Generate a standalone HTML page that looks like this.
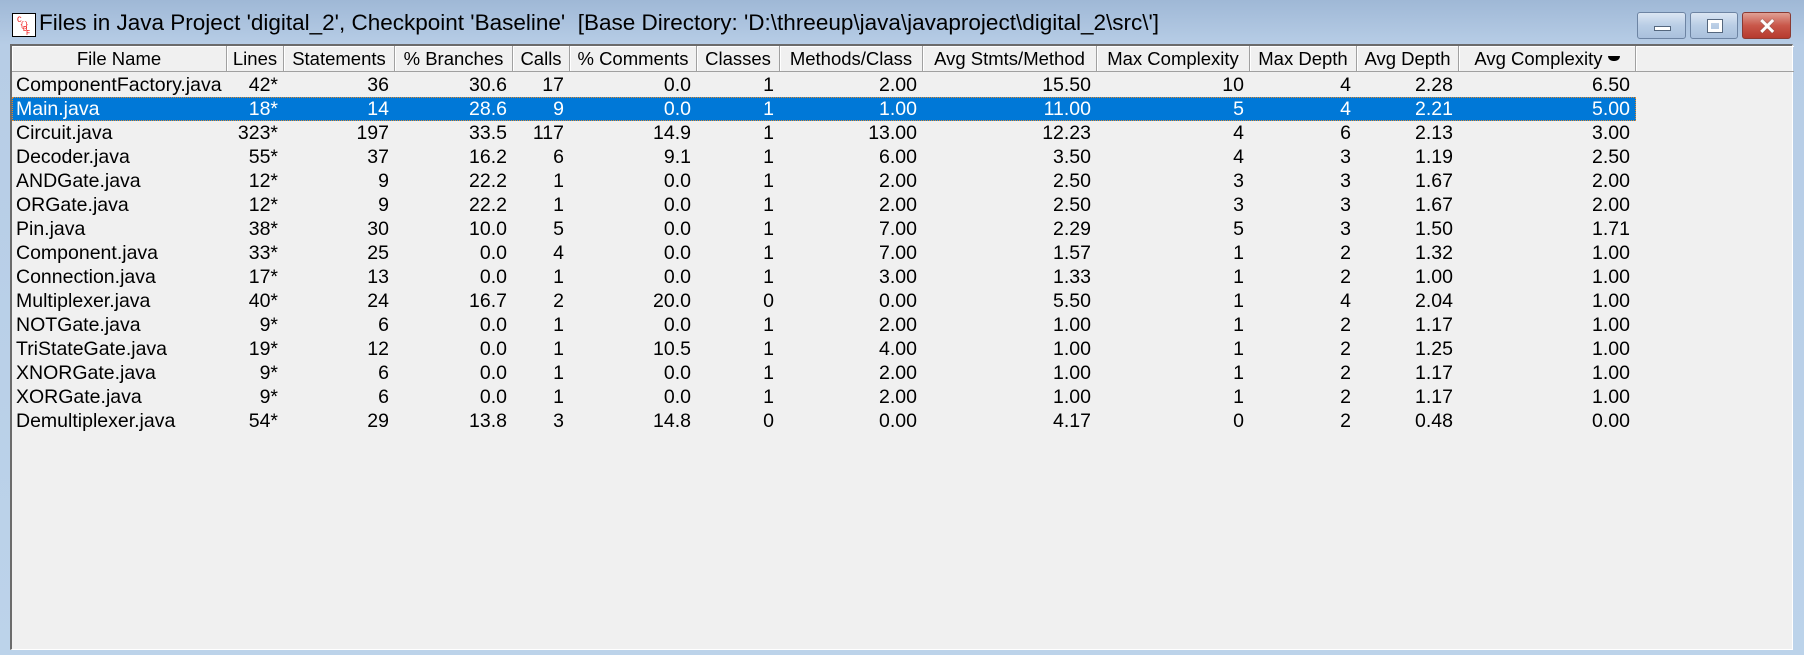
<!DOCTYPE html>
<html><head><meta charset="utf-8"><style>
*{margin:0;padding:0;box-sizing:border-box}
body{width:1804px;height:655px;overflow:hidden;background:linear-gradient(#9fb8d6,#b7cde6 45px,#bcd3ea);font-family:"Liberation Sans",Arial,sans-serif;position:relative}
.title{position:absolute;left:39px;top:10px;font-size:22.5px;color:#000;white-space:pre}
.icon{position:absolute;left:12px;top:13px;width:24px;height:24px;background:#fff;border:1px solid #000}
.btn{position:absolute;top:12px;height:27px;border:1px solid #6d84a3;border-radius:3px;background:linear-gradient(#dbe6f3,#b9cde5 50%,#a9c0dc)}
.close{background:linear-gradient(#e0a195,#c9574a 50%,#b63a2e);border-color:#8a3a33}
.panel{position:absolute;left:10px;top:44px;width:1783px;height:606px;background:#f0f0f0;border-left:2px solid #6b6b6b;border-top:2px solid #6b6b6b;border-right:1px solid #fff;border-bottom:1px solid #fff}
.hdr{position:absolute;top:0;height:26px;border-right:1px solid #a0a0a0;border-bottom:1px solid #a0a0a0;box-shadow:inset 1px 1px 0 #fff;font-size:18.5px;text-align:center;line-height:25px;white-space:nowrap;overflow:hidden}
.row{position:absolute;left:0;width:1624px;height:24px;font-size:19.5px;line-height:24px;white-space:nowrap}
.row span{position:absolute;top:0;text-align:right;padding-right:6px}
.row span:first-child{text-align:left;padding-left:4px}
.sel{background:#0078d7;color:#fff;outline:1px dotted #e08a30;outline-offset:-1px}
</style></head><body>
<div class="icon"><svg width="22" height="22" viewBox="0 0 22 22"><text x="4" y="8" font-size="8" fill="#e00" font-family="Liberation Mono">C</text><text x="7" y="13" font-size="7" fill="#e00" font-family="Liberation Mono">{}</text><text x="10" y="17" font-size="7" fill="#e00" font-family="Liberation Mono">D</text><text x="13" y="21" font-size="7" fill="#e00" font-family="Liberation Mono">F</text></svg></div>
<div class="title">Files in Java Project 'digital_2', Checkpoint 'Baseline'  [Base Directory: 'D:\threeup\java\javaproject\digital_2\src\']</div>
<div class="btn" style="left:1637px;width:49px"><div style="position:absolute;left:16px;top:13px;width:17px;height:5px;background:#fff;border:1px solid #55677e"></div></div>
<div class="btn" style="left:1690px;width:48px"><div style="position:absolute;left:17px;top:7px;width:14px;height:12px;border:3px solid #fff;outline:1px solid #55677e"></div></div>
<div class="btn close" style="left:1742px;width:49px"><div style="position:absolute;left:15px;top:1px;color:#fff;font-size:22px;font-weight:bold;text-shadow:0 0 1px #444">✕</div></div>
<div class="panel">
<div class="hdr" style="left:0;width:215px">File Name</div>
<div class="hdr" style="left:215px;width:57px">Lines</div>
<div class="hdr" style="left:272px;width:111px">Statements</div>
<div class="hdr" style="left:383px;width:118px">% Branches</div>
<div class="hdr" style="left:501px;width:57px">Calls</div>
<div class="hdr" style="left:558px;width:127px">% Comments</div>
<div class="hdr" style="left:685px;width:83px">Classes</div>
<div class="hdr" style="left:768px;width:143px">Methods/Class</div>
<div class="hdr" style="left:911px;width:174px">Avg Stmts/Method</div>
<div class="hdr" style="left:1085px;width:153px">Max Complexity</div>
<div class="hdr" style="left:1238px;width:107px">Max Depth</div>
<div class="hdr" style="left:1345px;width:102px">Avg Depth</div>
<div class="hdr" style="left:1447px;width:177px">Avg Complexity <span style="display:inline-block;width:12px;height:5px;background:#000;border-radius:0 0 6px 6px;vertical-align:4px"></span></div>
<div class="hdr" style="left:1624px;width:158px;border-right:none"></div>
<div id="rows"></div>
</div>
<script>
var L=[0,215,272,383,501,558,685,768,911,1085,1238,1345,1447,1624];
var D=[["ComponentFactory.java","42*","36","30.6","17","0.0","1","2.00","15.50","10","4","2.28","6.50"],
["Main.java","18*","14","28.6","9","0.0","1","1.00","11.00","5","4","2.21","5.00"],
["Circuit.java","323*","197","33.5","117","14.9","1","13.00","12.23","4","6","2.13","3.00"],
["Decoder.java","55*","37","16.2","6","9.1","1","6.00","3.50","4","3","1.19","2.50"],
["ANDGate.java","12*","9","22.2","1","0.0","1","2.00","2.50","3","3","1.67","2.00"],
["ORGate.java","12*","9","22.2","1","0.0","1","2.00","2.50","3","3","1.67","2.00"],
["Pin.java","38*","30","10.0","5","0.0","1","7.00","2.29","5","3","1.50","1.71"],
["Component.java","33*","25","0.0","4","0.0","1","7.00","1.57","1","2","1.32","1.00"],
["Connection.java","17*","13","0.0","1","0.0","1","3.00","1.33","1","2","1.00","1.00"],
["Multiplexer.java","40*","24","16.7","2","20.0","0","0.00","5.50","1","4","2.04","1.00"],
["NOTGate.java","9*","6","0.0","1","0.0","1","2.00","1.00","1","2","1.17","1.00"],
["TriStateGate.java","19*","12","0.0","1","10.5","1","4.00","1.00","1","2","1.25","1.00"],
["XNORGate.java","9*","6","0.0","1","0.0","1","2.00","1.00","1","2","1.17","1.00"],
["XORGate.java","9*","6","0.0","1","0.0","1","2.00","1.00","1","2","1.17","1.00"],
["Demultiplexer.java","54*","29","13.8","3","14.8","0","0.00","4.17","0","2","0.48","0.00"]];
var h="";D.forEach(function(r,i){h+='<div class="row'+(i==1?' sel':'')+'" style="top:'+(27+i*24)+'px">';
r.forEach(function(c,j){h+='<span style="left:'+L[j]+'px;width:'+(L[j+1]-L[j])+'px">'+c+'</span>'});h+='</div>'});
document.getElementById("rows").innerHTML=h;
</script>
</body></html>
